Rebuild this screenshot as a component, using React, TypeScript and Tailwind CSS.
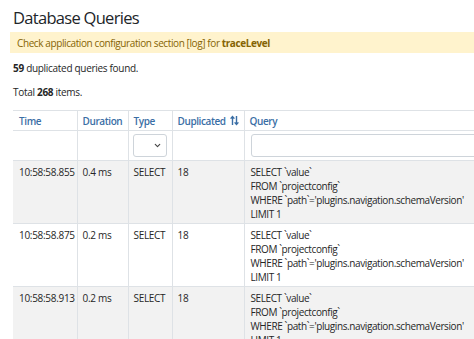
import { ChevronDown } from "lucide-react";

type Row = { time: string; duration: string; type: string; dup: number; query: string[] };

const QUERY = [
  "SELECT `value`",
  "FROM `projectconfig`",
  "WHERE `path`='plugins.navigation.schemaVersion'",
  "LIMIT 1",
];

const ROWS: Row[] = [
  { time: "10:58:58.855", duration: "0.4 ms", type: "SELECT", dup: 18, query: QUERY },
  { time: "10:58:58.875", duration: "0.2 ms", type: "SELECT", dup: 18, query: QUERY },
  { time: "10:58:58.913", duration: "0.2 ms", type: "SELECT", dup: 18, query: QUERY },
];

function SortIcon() {
  return (
    <svg width="9" height="11" viewBox="0 0 9 11" className="inline-block ml-[4px] -mt-[2px]">
      <path d="M2.5 1.5 L2.5 10 M0.6 3.6 L2.5 1.5 L4.4 3.6" stroke="#3a6ea5" strokeWidth="1.4" fill="none" />
      <path d="M6.5 1 L6.5 9.5 M4.6 7.4 L6.5 9.5 L8.4 7.4" stroke="#3a6ea5" strokeWidth="1.4" fill="none" />
    </svg>
  );
}

export default function App() {
  return (
    <div
      className="w-[474px] h-[339px] overflow-hidden bg-white text-[#262626] text-[10px] leading-[14px] tracking-[-0.3px]"
      style={{ fontFamily: '"Open Sans", "Noto Sans", sans-serif' }}
    >
      <div className="pl-[13px] pt-[7px]">
        <h1 className="text-[16.5px] leading-[22px] font-medium tracking-[-0.7px] text-[#212529]">Database Queries</h1>
      </div>
      <div className="ml-[10px] mt-[3px] h-[21px] bg-[#fff3cd] text-[#856404] pl-[7px] flex items-center tracking-[-0.4px]">
        Check application configuration section [log] for&nbsp;<b className="font-bold">traceLevel</b>
      </div>
      <p className="pl-[13px] mt-[8px]">
        <b className="font-bold">59</b> duplicated queries found.
      </p>
      <p className="pl-[13px] mt-[10px]">
        Total <b className="font-bold">268</b> items.
      </p>
      <div className="pl-[13px] mt-[11px]">
        <table className="border-collapse w-[560px] table-fixed">
          <colgroup>
            <col className="w-[64px]" />
            <col className="w-[51px]" />
            <col className="w-[44px]" />
            <col className="w-[72px]" />
            <col />
          </colgroup>
          <thead>
            <tr className="h-[20px] border-t border-b border-[#dee2e6] text-[#3a6ea5] text-left tracking-[-0.4px]">
              <th className="pl-[6px] font-semibold border-r border-[#dee2e6]">Time</th>
              <th className="pl-[5px] font-semibold border-r border-[#dee2e6]">Duration</th>
              <th className="pl-[5px] font-semibold border-r border-[#dee2e6]">Type</th>
              <th className="pl-[5px] font-semibold border-r border-[#dee2e6] whitespace-nowrap">
                Duplicated
                <SortIcon />
              </th>
              <th className="pl-[5px] font-semibold">Query</th>
            </tr>
            <tr className="h-[30px] border-b border-[#dee2e6]">
              <td className="border-r border-[#dee2e6]" />
              <td className="border-r border-[#dee2e6]" />
              <td className="border-r border-[#dee2e6] pl-[4px]">
                <div className="w-[34px] h-[23px] border border-[#ced4da] rounded-[3px] bg-white flex items-center justify-end pr-[4px]">
                  <ChevronDown size={9} strokeWidth={3} color="#444" />
                </div>
              </td>
              <td className="border-r border-[#dee2e6]" />
              <td className="pl-[6px]">
                <div className="h-[23px] border border-[#ced4da] rounded-[3px] bg-white" />
              </td>
            </tr>
          </thead>
          <tbody>
            {ROWS.map((r, i) => (
              <tr
                key={r.time}
                className={`align-top border-b border-[#dee2e6] ${i % 2 === 0 ? "bg-[#f2f2f2]" : "bg-white"}`}
              >
                <td className="pl-[6px] pt-[4px] pb-[2px] border-r border-[#dee2e6] whitespace-nowrap">{r.time}</td>
                <td className="pl-[5px] pt-[4px] pb-[2px] border-r border-[#dee2e6]">{r.duration}</td>
                <td className="pl-[5px] pt-[4px] pb-[2px] border-r border-[#dee2e6]">{r.type}</td>
                <td className="pl-[5px] pt-[4px] pb-[2px] border-r border-[#dee2e6]">{r.dup}</td>
                <td className="pl-[6px] pt-[4px] pb-[2px] tracking-[-0.4px]">
                  {r.query.map((l) => (
                    <div key={l} className="whitespace-nowrap">{l}</div>
                  ))}
                </td>
              </tr>
            ))}
          </tbody>
        </table>
      </div>
    </div>
  );
}
